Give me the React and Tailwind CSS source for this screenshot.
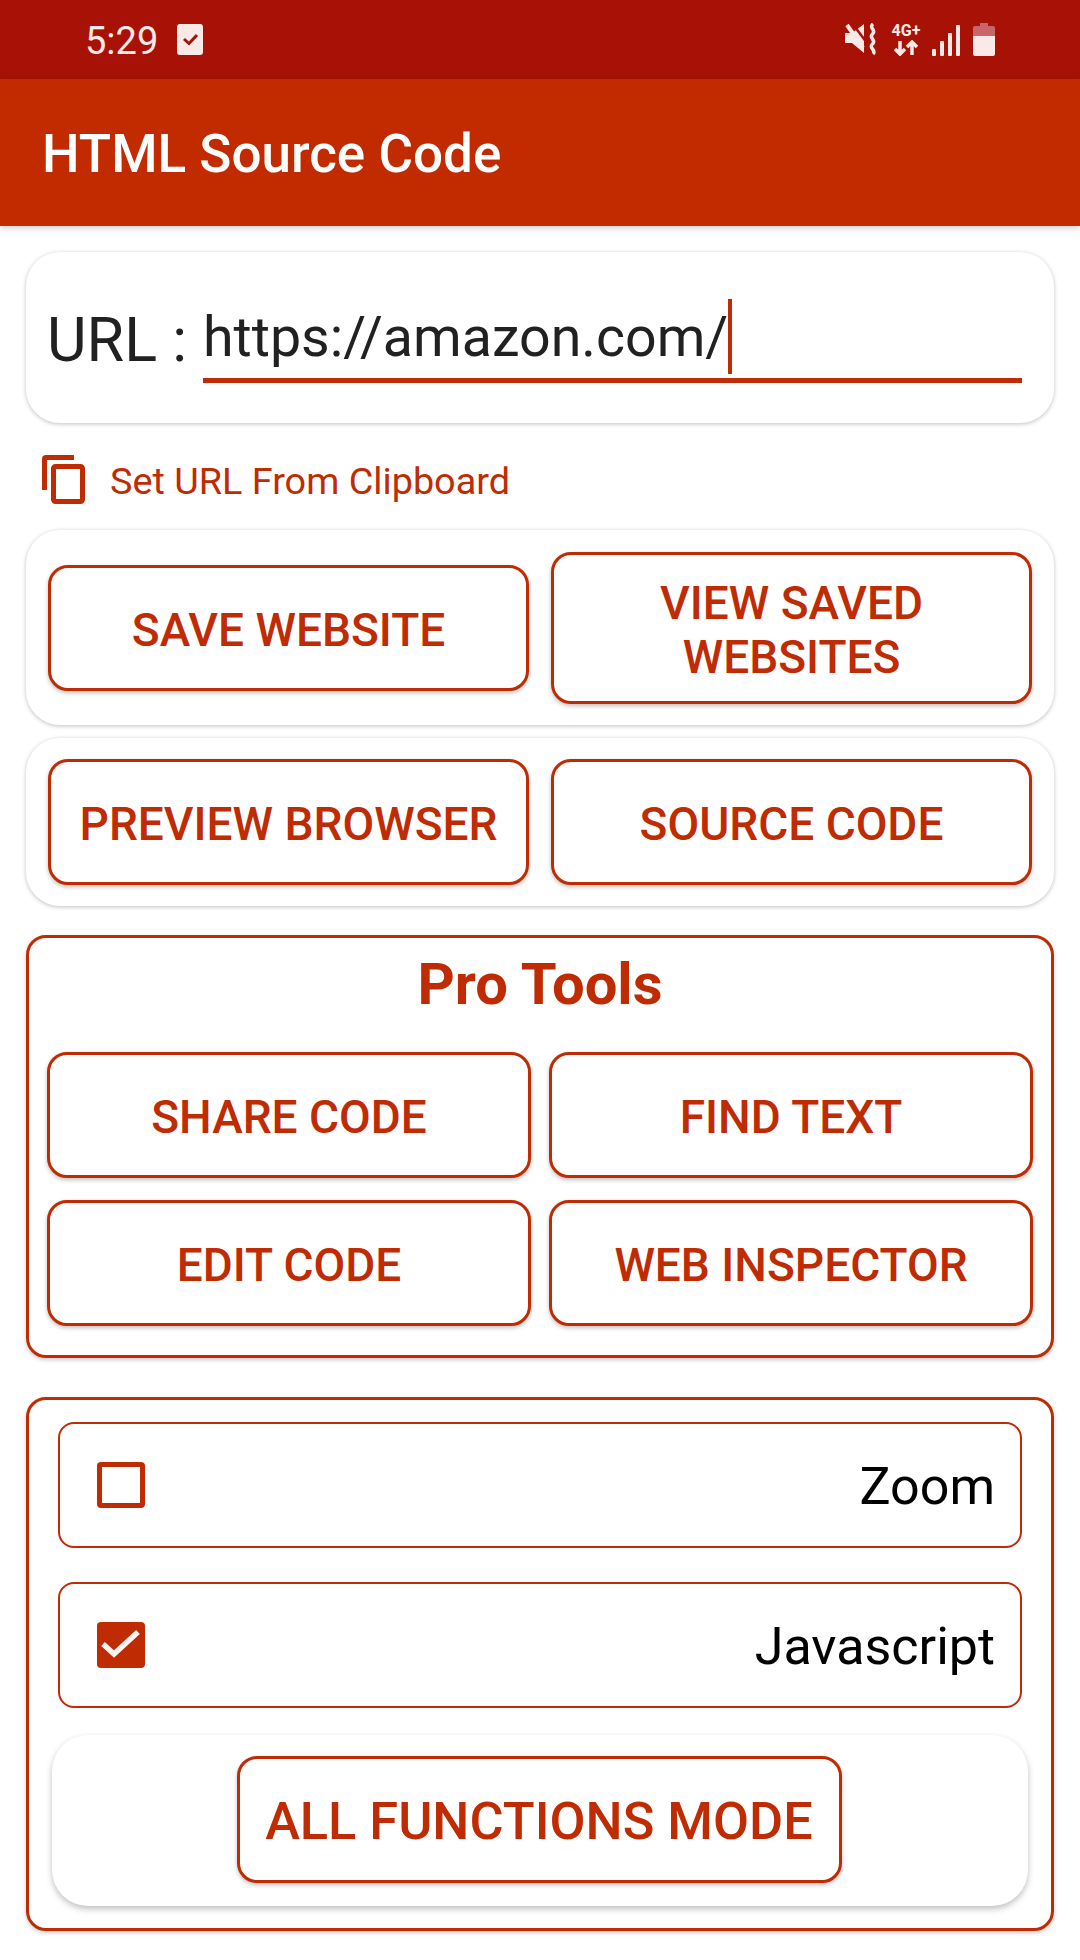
import React from 'react'

const OutlineButton = ({ children, className = '' }) => (
  <button className={`flex items-center justify-center rounded-[20px] border-[3.5px] border-[#bf2b03] bg-white pt-[4px] text-center font-medium text-[#bf2b03] shadow-[0_2px_4px_rgba(0,0,0,0.25)] ${className}`}>
    {children}
  </button>
)

const StatusIcons = () => (
  <div className="flex items-center">
    <svg width="34" height="34" viewBox="0 0 34 34" className="text-[#f9e9e7]">
      <path d="M1 10 H8 L20 1 V30 L8 20 H1 Z" fill="currentColor" />
      <path d="M8 0 L23 20" stroke="#a81206" strokeWidth="2.5" />
      <path d="M3 2 L19 25" stroke="currentColor" strokeWidth="4" />
      <path d="M29 1 C24 5 33 7 28.5 11 C24 15 33 17 28.5 21 C24 25 33 27 29 31" fill="none" stroke="currentColor" strokeWidth="3.5" />
    </svg>
    <div className="ml-[12px] flex w-[32px] flex-col items-center">
      <span className="text-[16px] font-bold leading-[15px] text-[#f9e9e7]">4G+</span>
      <svg width="24" height="16" viewBox="0 0 24 16" className="mt-[2px] text-[#f9e9e7]">
        <path d="M6 1 V14 M1 9 L6 14 L11 9" fill="none" stroke="currentColor" strokeWidth="3.5" />
        <path d="M18 15 V2 M13 7 L18 2 L23 7" fill="none" stroke="currentColor" strokeWidth="3.5" />
      </svg>
    </div>
    <svg width="28" height="32" viewBox="0 0 28 32" className="ml-[10px] text-[#f9e9e7]">
      <rect x="0" y="25" width="4" height="7" rx="1" fill="currentColor" />
      <rect x="8" y="17" width="4" height="15" rx="1" fill="currentColor" />
      <rect x="16" y="9" width="4" height="23" rx="1" fill="currentColor" />
      <rect x="24" y="1" width="4" height="31" rx="1" fill="currentColor" />
    </svg>
    <svg width="22" height="33" viewBox="0 0 22 33" className="ml-[13px]">
      <path d="M7 0 H15 V3 H20 Q22 3 22 5 V13 H0 V5 Q0 3 2 3 H7 Z" fill="#c9666a" />
      <path d="M0 13 H22 V31 Q22 33 20 33 H2 Q0 33 0 31 Z" fill="#f9e9e7" />
    </svg>
  </div>
)

const CheckRow = ({ label, checked }) => (
  <div className="flex h-[126px] items-center justify-between rounded-[16px] border-[2.5px] border-[#bf2b03] pl-[37px] pr-[25px]">
    {checked ? (
      <div className="flex h-[46px] w-[48px] items-center justify-center rounded-[4px] bg-[#bf2b03]">
        <svg width="48" height="46" viewBox="0 0 48 46">
          <path d="M6 22 L17 32 L41 10" fill="none" stroke="#fdf3f0" strokeWidth="5.5" />
        </svg>
      </div>
    ) : (
      <div className="h-[46px] w-[48px] rounded-[4px] border-[5px] border-[#bf2b03]" />
    )}
    <span className="pt-[3px] text-[52px] leading-none text-black">{label}</span>
  </div>
)

export default function App() {
  return (
    <div className="flex h-[1960px] w-[1080px] flex-col overflow-hidden bg-white font-['Roboto',sans-serif]">
      <div className="flex h-[79px] shrink-0 items-center justify-between bg-[#a81206] pl-[85px] pr-[85px]">
        <div className="flex items-center">
          <span className="pt-[3px] text-[38px] leading-none text-[#f9e9e7]">5:29</span>
          <div className="ml-[19px] flex h-[31px] w-[26px] items-center justify-center rounded-[3px] bg-[#f9e9e7]">
            <svg width="17" height="13" viewBox="0 0 17 13">
              <path d="M2 6 L7 10.5 L15 2" fill="none" stroke="#a81206" strokeWidth="3" />
            </svg>
          </div>
        </div>
        <StatusIcons />
      </div>

      <div className="flex h-[147px] shrink-0 items-center bg-[#c22b00] pl-[42px] pt-[4px] shadow-[0_2px_6px_rgba(0,0,0,0.2)]">
        <h1 className="text-[53px] font-medium leading-none text-white">HTML Source Code</h1>
      </div>

      <div className="flex flex-col px-[26px]">
        <div className="mt-[26px] flex h-[171px] items-center justify-between rounded-[34px] bg-white pl-[21px] pr-[32px] shadow-[0_1px_4px_rgba(0,0,0,0.25)]">
          <span className="pt-[6px] text-[61px] leading-none text-[#212121]">URL :</span>
          <div className="h-[91px] w-[819px] border-b-[5px] border-[#bf2b03] pt-[7px]">
            <span className="inline-block border-r-[4px] border-[#bf2b03] pt-[3px] text-[55.5px] leading-[72px] text-[#212121]">https://amazon.com/</span>
          </div>
        </div>

        <div className="mt-[32px] flex h-[49px] items-center pl-[16px]">
          <svg width="44" height="49" viewBox="0 0 44 49">
            <path d="M2.5 35 V4 Q2.5 2.5 4 2.5 H32" fill="none" stroke="#bf2b03" strokeWidth="5" />
            <rect x="11.5" y="11.5" width="29" height="35" rx="2" fill="none" stroke="#bf2b03" strokeWidth="5" />
          </svg>
          <span className="ml-[24px] pt-[4px] text-[37.8px] leading-none text-[#bf2b03]">Set URL From Clipboard</span>
        </div>

        <div className="mt-[26px] grid h-[195px] grid-cols-2 items-center gap-x-[22px] rounded-[34px] bg-white px-[22px] shadow-[0_1px_4px_rgba(0,0,0,0.25)]">
          <OutlineButton className="h-[126px] text-[46px] leading-[54px]">SAVE WEBSITE</OutlineButton>
          <OutlineButton className="h-[152px] text-[46px] leading-[54px]">VIEW SAVED<br />WEBSITES</OutlineButton>
        </div>

        <div className="mt-[13px] grid h-[168px] grid-cols-2 items-center gap-x-[22px] rounded-[34px] bg-white px-[22px] shadow-[0_1px_4px_rgba(0,0,0,0.25)]">
          <OutlineButton className="h-[126px] text-[46px]">PREVIEW BROWSER</OutlineButton>
          <OutlineButton className="h-[126px] text-[46px]">SOURCE CODE</OutlineButton>
        </div>

        <div className="mt-[29px] flex h-[423px] flex-col rounded-[20px] border-[3.5px] border-[#bf2b03] px-[18px] shadow-[0_2px_4px_rgba(0,0,0,0.2)]">
          <h2 className="mt-[14px] text-center text-[58px] font-bold leading-[64px] text-[#bf2b03]">Pro Tools</h2>
          <div className="mt-[36px] grid grid-cols-2 gap-x-[18px] gap-y-[22px]">
            <OutlineButton className="h-[126px] text-[46px]">SHARE CODE</OutlineButton>
            <OutlineButton className="h-[126px] text-[46px]">FIND TEXT</OutlineButton>
            <OutlineButton className="h-[126px] text-[46px]">EDIT CODE</OutlineButton>
            <OutlineButton className="h-[126px] text-[46px]">WEB INSPECTOR</OutlineButton>
          </div>
        </div>

        <div className="mt-[39px] flex h-[534px] flex-col rounded-[20px] border-[3.5px] border-[#bf2b03] px-[29px] pt-[22px] shadow-[0_2px_4px_rgba(0,0,0,0.2)]">
          <CheckRow label="Zoom" />
          <div className="mt-[34px]">
            <CheckRow label="Javascript" checked />
          </div>
          <div className="-mx-[6px] mt-[27px] flex h-[171px] items-center justify-center rounded-[36px] bg-white shadow-[0_3px_6px_rgba(0,0,0,0.25)]">
            <OutlineButton className="mb-[2px] mr-[2px] h-[127px] w-[605px] text-[52.3px]">ALL FUNCTIONS MODE</OutlineButton>
          </div>
        </div>
      </div>
    </div>
  )
}
